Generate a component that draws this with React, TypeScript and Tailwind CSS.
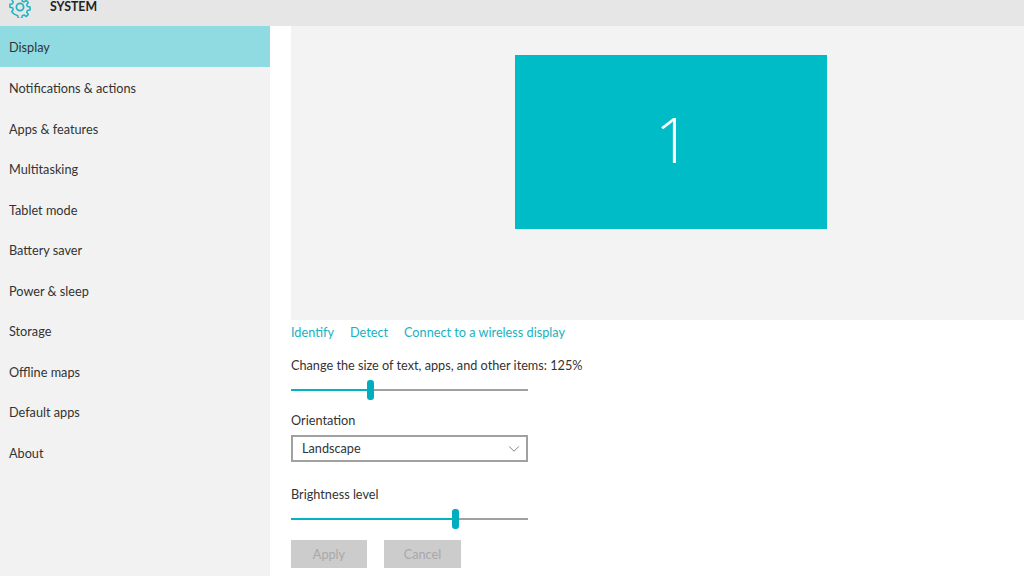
import React from 'react';
import { ChevronDown } from 'lucide-react';

const navItems = [
  'Display',
  'Notifications & actions',
  'Apps & features',
  'Multitasking',
  'Tablet mode',
  'Battery saver',
  'Power & sleep',
  'Storage',
  'Offline maps',
  'Default apps',
  'About',
];

// Windows style outline cog, its top is cut by the header edge
function GearIcon() {
  return (
    <svg width="22" height="22" viewBox="0 0 22 22" fill="none" stroke="#1fb4c0" strokeWidth="1.7" strokeLinejoin="round">
      <circle cx="11" cy="11" r="3.6" />
      <path d="M9 1.5h4l.5 3 2 .9 2.5-1.8 2.2 2.4-1.7 2.4.8 2 2.9.6v3.2l-2.9.6-.8 2 1.7 2.4-2.2 2.4-2.5-1.8-2 .9-.5 3H9l-.5-3-2-.9L4 18.6l-2.2-2.4 1.7-2.4-.8-2-2.9-.6V8l2.9-.6.8-2-1.7-2.4L4 .6l2.5 1.8 2-.9z" transform="translate(1.1 1.1) scale(.9)" />
    </svg>
  );
}

function Slider({ filled }: { filled: string }) {
  return (
    <div className="flex items-center h-[20px] w-[237px]">
      <div className={`h-[2px] bg-[#00b4c3] ${filled}`} />
      <div className="w-[7px] h-[20px] rounded-[3px] bg-[#00aebf] shrink-0" />
      <div className="h-[2px] flex-1 bg-[#a0a0a0]" />
    </div>
  );
}

export default function App() {
  return (
    <div className="w-[1024px] h-[576px] overflow-hidden bg-white text-[#333333] text-[12.7px] font-['Lato','Noto_Sans',sans-serif] flex flex-col">
      <header className="h-[26px] shrink-0 bg-[#e6e6e6] flex items-start overflow-hidden">
        <div className="-mt-[4px] ml-[9px] h-[22px]">
          <GearIcon />
        </div>
        <span className="ml-[19px] font-bold text-[12.3px] leading-[13px] text-[#222222]">SYSTEM</span>
      </header>
      <div className="flex flex-1 min-h-0">
        <nav className="w-[270px] shrink-0 bg-[#f2f2f2]">
          {navItems.map((item, i) => (
            <div
              key={item}
              className={`h-[40.5px] pl-[9px] flex items-center ${i === 0 ? 'bg-[#8fdbe1] pt-[2px]' : 'pt-[4px]'}`}
            >
              {item}
            </div>
          ))}
        </nav>
        <main className="flex-1 pl-[21px]">
          <div className="h-[294px] bg-[#f3f3f3] pt-[29px] pl-[224px]">
            <div className="w-[312px] h-[174px] bg-[#00bcc6] flex items-center justify-center pb-[6px] pl-[4px]">
              <span className="text-white text-[62px] font-light leading-none font-['Open_Sans',sans-serif]">1</span>
            </div>
          </div>
          <div className="mt-[3px] h-[19px] flex items-center gap-[16px] text-[#17b1bf]">
            <span>Identify</span>
            <span>Detect</span>
            <span>Connect to a wireless display</span>
          </div>
          <p className="mt-[14px] h-[19px] leading-[19px]">Change the size of text, apps, and other items: 125%</p>
          <div className="mt-[5px]">
            <Slider filled="w-[76px]" />
          </div>
          <p className="mt-[11px] h-[19px] leading-[19px]">Orientation</p>
          <div className="mt-[5px] w-[237px] h-[27px] border-2 border-[#a0a0a0] bg-white pl-[9px] pr-[3px] flex items-center justify-between">
            <span>Landscape</span>
            <ChevronDown size={18} strokeWidth={1} className="text-[#555555]" />
          </div>
          <p className="mt-[23px] h-[19px] leading-[19px]">Brightness level</p>
          <div className="mt-[5px]">
            <Slider filled="w-[161px]" />
          </div>
          <div className="mt-[11px] flex gap-[17px]">
            <button className="w-[76px] h-[28px] pt-[1px] bg-[#cccccc] text-[#a8a8a8]">Apply</button>
            <button className="w-[77px] h-[28px] pt-[1px] bg-[#cccccc] text-[#a8a8a8]">Cancel</button>
          </div>
        </main>
      </div>
    </div>
  );
}
